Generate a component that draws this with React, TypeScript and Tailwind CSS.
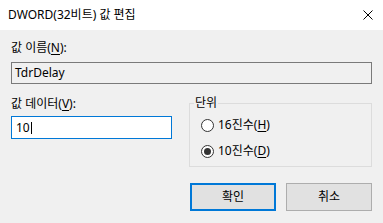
import React from 'react';

const font = 'font-["Noto_Sans","Noto_Sans_CJK_KR",sans-serif]';

const Radio: React.FC<{ label: string; hot: string; rest: string; checked?: boolean }> = ({ label, hot, rest, checked }) => (
  <div className="flex h-5 items-center">
    <span className="flex h-[13px] w-[13px] items-center justify-center rounded-full border border-[#333333] bg-white">
      {checked && <span className="h-[7px] w-[7px] rounded-full bg-[#333333]" />}
    </span>
    <span className="ml-[4px] leading-4">
      {label}(<span className="underline underline-offset-2">{hot}</span>){rest}
    </span>
  </div>
);

export default function App() {
  return (
    <div className={`h-[223px] w-[383px] overflow-hidden bg-[#f0f0f0] text-[12px] text-black ${font}`}>
      {/* title bar */}
      <div className="flex h-[30px] items-center justify-between bg-white pl-[8px] pr-[10px]">
        <span className="leading-4">DWORD(32비트) 값 편집</span>
        <svg width="10" height="10" viewBox="0 0 10 10" className="mr-[0px]">
          <path d="M0.5 0.5L9.5 9.5M9.5 0.5L0.5 9.5" stroke="#000" strokeWidth="1" />
        </svg>
      </div>

      <div className="flex flex-col px-[11px] pt-[10px]">
        <div className="h-4 leading-4">
          값 이름(<span className="underline underline-offset-2">N</span>):
        </div>
        <div className="mt-[6px] flex h-[22px] items-center border border-[#7a7a7a] px-[3px]">
          TdrDelay
        </div>

        <div className="flex">
          <div className="flex w-[161px] flex-col">
            <div className="mt-[12px] h-4 leading-4">
              값 데이터(<span className="underline underline-offset-2">V</span>):
            </div>
            <div className="mt-[4px] flex h-[23px] items-center border border-[#0078d7] bg-white px-[4px]">
              <span className="leading-4">10</span>
              <span className="ml-[1px] h-[12px] w-px bg-black" />
            </div>
          </div>

          <fieldset className="ml-[17px] mt-[11px] h-[72px] flex-1 border border-[#dcdcdc] px-0">
            <legend className="ml-[4px] px-[1px] leading-4">단위</legend>
            <div className="flex flex-col gap-[6px] pl-[11px] pt-[4px]">
              <Radio label="16진수" hot="H" rest="" />
              <Radio label="10진수" hot="D" rest="" checked />
            </div>
          </fieldset>
        </div>

        <div className="mt-[16px] flex justify-end gap-[10px]">
          <button className="h-[28px] w-[86px] border-2 border-[#0078d7] bg-[#e1e1e1] leading-4">확인</button>
          <button className="h-[28px] w-[86px] border border-[#adadad] bg-[#e1e1e1] leading-4">취소</button>
        </div>
      </div>
    </div>
  );
}
